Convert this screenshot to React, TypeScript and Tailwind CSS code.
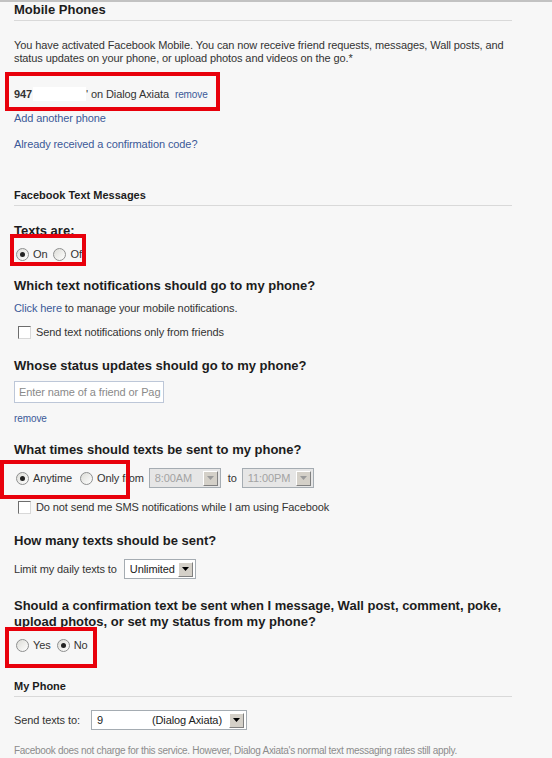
import React from "react";

// Old-style form widgets, drawn by hand so they look like the screenshot
function Radio({ checked, className = "" }: { checked?: boolean; className?: string }) {
  return (
    <span
      className={`flex h-[13px] w-[13px] shrink-0 items-center justify-center rounded-full border border-[#8e8f8f] bg-gradient-to-br from-[#dcdcd7] to-white ${className}`}
    >
      {checked && <span className="h-[5px] w-[5px] rounded-full bg-[#222]" />}
    </span>
  );
}

function Checkbox() {
  return (
    <span className="block h-[13px] w-[13px] shrink-0 border border-t-[#6d6d6d] border-l-[#6d6d6d] border-r-[#d8d8d8] border-b-[#d8d8d8] bg-white" />
  );
}

function SelectButton({ disabled }: { disabled?: boolean }) {
  return (
    <span className="flex h-[15px] w-[15px] shrink-0 items-center justify-center border border-t-white border-l-white border-r-[#808080] border-b-[#808080] bg-[#d4d0c8]">
      <svg width="7" height="4" viewBox="0 0 7 4">
        <path d="M0 0h7L3.5 4z" fill={disabled ? "#9a9a9a" : "#000"} />
      </svg>
    </span>
  );
}

function Select({
  className,
  disabled,
  children,
}: {
  className: string;
  disabled?: boolean;
  children: React.ReactNode;
}) {
  return (
    <span
      className={`flex h-[20px] shrink-0 items-center justify-between border border-[#a5acb2] pl-[5px] pr-[2px] ${className} ${
        disabled ? "bg-[#e6e6e6] text-[#a3a3a3]" : "bg-white text-[#222]"
      }`}
    >
      <span className="overflow-hidden whitespace-nowrap">{children}</span>
      <SelectButton disabled={disabled} />
    </span>
  );
}

// Red annotation frame laid over a row
function Frame({ className }: { className: string }) {
  return (
    <span
      className={`pointer-events-none absolute border-[4px] border-[#e8000b] ${className}`}
    />
  );
}

const heading =
  "text-[13px] font-bold leading-[16px] tracking-normal text-[#1c1c1c]";
const link = "text-[#3b5998]";

export default function App() {
  return (
    <div className="min-h-[758px] w-[552px] overflow-hidden border-t-2 border-[#c2c2c2] bg-[#f7f7f7] pl-[14px] pr-[40px] font-['Liberation_Sans',Arial,sans-serif] text-[11px] tracking-[-0.1px] text-[#333]">
      <h2 className="border-b border-[#d9d9d9] pb-[2px] text-[13px] font-bold leading-[16px] tracking-normal text-[#1c1c1c]">
        Mobile Phones
      </h2>
      <p className="mt-[18px] whitespace-nowrap leading-[13px]">
        You have activated Facebook Mobile. You can now receive friend requests,
        messages, Wall posts, and
        <br />
        status updates on your phone, or upload photos and videos on the go.*
      </p>

      <div className="relative mt-[21px] flex h-[16px] items-center">
        <span className="font-bold">947</span>
        <span className="ml-[1px] block h-[14px] w-[53px] bg-white" />
        <span className="whitespace-pre">' on Dialog Axiata</span>
        <span className={`ml-[6px] text-[10px] ${link}`}>remove</span>
        <Frame className="-left-[9px] -top-[14px] h-[39px] w-[215px]" />
      </div>
      <div className={`mt-[9px] leading-[14px] ${link}`}>Add another phone</div>
      <div className={`mt-[12px] leading-[14px] ${link}`}>
        Already received a confirmation code?
      </div>

      <h3 className="mt-[37px] border-b border-[#d9d9d9] pb-[3px] text-[11px] font-bold leading-[14px] tracking-normal text-[#1c1c1c]">
        Facebook Text Messages
      </h3>

      <div className={`mt-[17px] ${heading}`}>Texts are:</div>
      <div className="relative mt-[8px] flex h-[14px] items-center">
        <Radio checked className="ml-[2px]" />
        <span className="ml-[4px]">On</span>
        <Radio className="ml-[6px]" />
        <span className="ml-[4px]">Off</span>
        <Frame className="-left-[4px] -top-[13px] h-[32px] w-[76px]" />
      </div>

      <div className={`mt-[17px] ${heading}`}>
        Which text notifications should go to my phone?
      </div>
      <div className="mt-[7px] leading-[14px]">
        <span className={link}>Click here</span> to manage your mobile
        notifications.
      </div>
      <div className="mt-[10px] flex h-[14px] items-center gap-[5px] pl-[4px]">
        <Checkbox />
        <span>Send text notifications only from friends</span>
      </div>

      <div className={`mt-[19px] ${heading}`}>
        Whose status updates should go to my phone?
      </div>
      <div className="mt-[7px] flex h-[22px] w-[150px] items-center overflow-hidden border border-[#bdc7d8] bg-white px-[4px] text-[#8a8a8a]">
        <span className="whitespace-nowrap">Enter name of a friend or Pag</span>
      </div>
      <div className={`mt-[10px] text-[10px] leading-[12px] ${link}`}>remove</div>

      <div className={`mt-[17px] ${heading}`}>
        What times should texts be sent to my phone?
      </div>
      <div className="relative mt-[10px] flex h-[20px] items-center">
        <Radio checked className="ml-[2px]" />
        <span className="ml-[4px]">Anytime</span>
        <Radio className="ml-[8px]" />
        <span className="ml-[4px]">Only from</span>
        <Select className="ml-[5px] w-[72px]" disabled>
          8:00AM
        </Select>
        <span className="ml-[7px]">to</span>
        <Select className="ml-[5px] w-[72px]" disabled>
          11:00PM
        </Select>
        <Frame className="-left-[14px] -top-[8px] h-[39px] w-[130px]" />
      </div>
      <div className="mt-[12px] flex h-[14px] items-center gap-[5px] pl-[4px]">
        <Checkbox />
        <span>Do not send me SMS notifications while I am using Facebook</span>
      </div>

      <div className={`mt-[19px] ${heading}`}>How many texts should be sent?</div>
      <div className="mt-[10px] flex h-[20px] items-center gap-[7px]">
        <span>Limit my daily texts to</span>
        <Select className="w-[72px]">Unlimited</Select>
      </div>

      <div className={`mt-[19px] whitespace-nowrap ${heading} leading-[15px]`}>
        Should a confirmation text be sent when I message, Wall post, comment,
        poke,
        <br />
        upload photos, or set my status from my phone?
      </div>
      <div className="relative mt-[8px] flex h-[14px] items-center">
        <Radio className="ml-[2px]" />
        <span className="ml-[4px]">Yes</span>
        <Radio checked className="ml-[6px]" />
        <span className="ml-[4px]">No</span>
        <Frame className="-left-[9px] -top-[11px] h-[41px] w-[92px]" />
      </div>

      <h3 className="mt-[27px] border-b border-[#d9d9d9] pb-[3px] text-[11px] font-bold leading-[14px] tracking-normal text-[#1c1c1c]">
        My Phone
      </h3>
      <div className="mt-[13px] flex h-[20px] items-center">
        <span>Send texts to:</span>
        <Select className="ml-[11px] w-[156px]">
          <span className="flex items-center pr-[3px]">
            9
            <span className="ml-[1px] block h-[18px] w-[42px] bg-white" />
            <span className="ml-[6px]">(Dialog Axiata)</span>
          </span>
        </Select>
      </div>

      <p className="mt-[15px] whitespace-nowrap text-[10px] leading-[12px] tracking-[-0.3px] text-[#8c8c8c]">
        Facebook does not charge for this service. However, Dialog Axiata's
        normal text messaging rates still apply.
      </p>
    </div>
  );
}
